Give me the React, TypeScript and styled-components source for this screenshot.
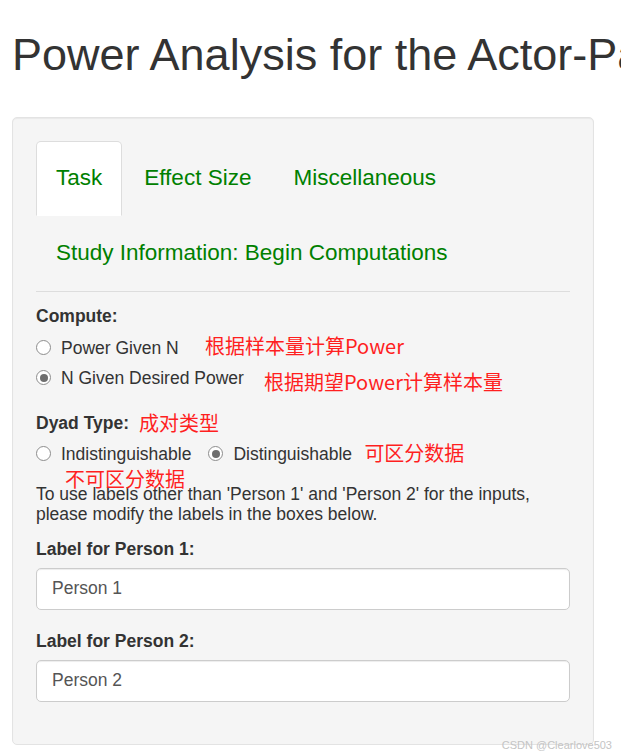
import React from "react";
import styled, { createGlobalStyle, css } from "styled-components";

const GlobalStyle = createGlobalStyle`
  html, body { margin: 0; padding: 0; background: #fff; overflow: hidden; }
  body {
    font-family: "Liberation Sans", Arial, "Noto Sans CJK SC", sans-serif;
    font-size: 17.5px;
    color: #333;
  }
  * { box-sizing: border-box; }
`;

const Page = styled.div`
  position: relative;
  width: 621px;
  height: 755px;
  padding: 30px 27px 0 12px;
  overflow: hidden;
`;

const Title = styled.h1`
  margin: 0 0 37px;
  font-size: 45px;
  font-weight: 400;
  line-height: 1.1;
  white-space: nowrap;
  color: #333;
`;

const Well = styled.div`
  background: #f5f5f5;
  border: 1px solid #e3e3e3;
  border-radius: 5px;
  box-shadow: inset 0 1px 1px rgba(0, 0, 0, 0.05);
  padding: 23px 23px 42px;
`;

const Tabs = styled.ul`
  display: flex;
  flex-wrap: wrap;
  list-style: none;
  margin: 0;
  padding: 0;
  border-bottom: 1px solid #ddd;
`;

const Tab = styled.li<{ $active?: boolean }>`
  margin-right: 2px;
  padding: 23px 19px 25px;
  line-height: 25px;
  font-size: 22.5px;
  color: #008000;
  border: 1px solid transparent;
  border-radius: 5px 5px 0 0;
  ${(p) =>
    p.$active &&
    css`
      background: #fff;
      border-color: #ddd #ddd transparent;
    `}
`;

const Body = styled.div`
  padding-top: 14px;
`;

const FieldLabel = styled.div<{ $gap?: number }>`
  position: relative;
  margin-top: ${(p) => p.$gap ?? 0}px;
  font-weight: 700;
  line-height: 20px;
`;

const RadioList = styled.div<{ $gap?: number; $inline?: boolean }>`
  display: flex;
  flex-direction: ${(p) => (p.$inline ? "row" : "column")};
  gap: ${(p) => (p.$inline ? 17 : 10)}px;
  margin-top: ${(p) => p.$gap ?? 0}px;
  position: relative;
`;

const RadioRow = styled.label`
  position: relative;
  display: flex;
  align-items: center;
  gap: 10px;
  line-height: 20px;
  white-space: nowrap;
`;

const RadioCircle = styled.span<{ $checked?: boolean }>`
  position: relative;
  flex: none;
  width: 15px;
  height: 15px;
  border-radius: 50%;
  border: 1px solid #8d8d8d;
  background: #fff;
  ${(p) =>
    p.$checked &&
    css`
      &::after {
        content: "";
        position: absolute;
        inset: 2.5px;
        border-radius: 50%;
        background: #6e6e6e;
      }
    `}
`;

const Note = styled.span<{ $x: number; $y: number }>`
  position: absolute;
  left: ${(p) => p.$x}px;
  top: ${(p) => p.$y}px;
  font-family: "Noto Sans CJK SC", "Liberation Sans", sans-serif;
  font-size: 20px;
  font-weight: 400;
  line-height: 24px;
  color: #ff1f1f;
  white-space: nowrap;
`;

const Help = styled.p`
  margin: 20px 0 0;
  line-height: 20px;
`;

const TextInput = styled.input`
  display: block;
  width: 100%;
  height: 42px;
  margin-top: 9px;
  padding: 0 15px;
  border: 1px solid #ccc;
  border-radius: 5px;
  background: #fff;
  box-shadow: inset 0 1px 1px rgba(0, 0, 0, 0.075);
  font-family: "Liberation Sans", Arial, sans-serif;
  font-size: 17.5px;
  color: #555;
  outline: none;
`;

const Watermark = styled.div`
  position: absolute;
  right: 9px;
  bottom: 4px;
  font-family: "Liberation Sans", Arial, sans-serif;
  font-size: 11px;
  color: #c4c4c4;
  white-space: nowrap;
`;

type RadioProps = { label: string; checked?: boolean; children?: React.ReactNode };

function Radio({ label, checked, children }: RadioProps) {
  return (
    <RadioRow>
      <RadioCircle $checked={checked} />
      <span>{label}</span>
      {children}
    </RadioRow>
  );
}

export default function App() {
  return (
    <>
      <GlobalStyle />
      <Page>
        <Title>Power Analysis for the Actor-Partner Interdependence Model</Title>
        <Well>
          <Tabs>
            <Tab $active>Task</Tab>
            <Tab>Effect Size</Tab>
            <Tab>Miscellaneous</Tab>
            <Tab>Study Information: Begin Computations</Tab>
          </Tabs>
          <Body>
            <FieldLabel>Compute:</FieldLabel>
            <RadioList $gap={12}>
              <Radio label="Power Given N">
                <Note $x={169} $y={-4}>根据样本量计算Power</Note>
              </Radio>
              <Radio label="N Given Desired Power" checked>
                <Note $x={228} $y={2}>根据期望Power计算样本量</Note>
              </Radio>
            </RadioList>
            <FieldLabel $gap={25}>
              Dyad Type:
              <Note $x={103} $y={-2}>成对类型</Note>
            </FieldLabel>
            <RadioList $gap={11} $inline>
              <Radio label="Indistinguishable">
                <Note $x={29} $y={23}>不可区分数据</Note>
              </Radio>
              <Radio label="Distinguishable" checked>
                <Note $x={156} $y={-3}>可区分数据</Note>
              </Radio>
            </RadioList>
            <Help>
              To use labels other than 'Person 1' and 'Person 2' for the inputs,
              <br />
              please modify the labels in the boxes below.
            </Help>
            <FieldLabel $gap={15}>Label for Person 1:</FieldLabel>
            <TextInput defaultValue="Person 1" />
            <FieldLabel $gap={21}>Label for Person 2:</FieldLabel>
            <TextInput defaultValue="Person 2" />
          </Body>
        </Well>
        <Watermark>CSDN @Clearlove503</Watermark>
      </Page>
    </>
  );
}
